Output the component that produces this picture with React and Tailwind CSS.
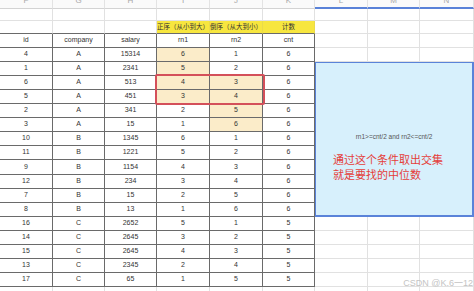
import React from "react";

const data = [
  ["4", "A", "15314", "6", "1", "6"],
  ["1", "A", "2341", "5", "2", "6"],
  ["6", "A", "513", "4", "3", "6"],
  ["5", "A", "451", "3", "4", "6"],
  ["2", "A", "341", "2", "5", "6"],
  ["3", "A", "15", "1", "6", "6"],
  ["10", "B", "1345", "6", "1", "6"],
  ["11", "B", "1221", "5", "2", "6"],
  ["9", "B", "1154", "4", "3", "6"],
  ["12", "B", "234", "3", "4", "6"],
  ["7", "B", "15", "2", "5", "6"],
  ["8", "B", "13", "1", "6", "6"],
  ["16", "C", "2652", "5", "1", "5"],
  ["14", "C", "2645", "3", "2", "5"],
  ["15", "C", "2645", "4", "3", "5"],
  ["13", "C", "2345", "2", "4", "5"],
  ["17", "C", "65", "1", "5", "5"],
];

const letters = ["F", "G", "H", "I", "J", "K", "L", "M", "N"];

const LIGHT = "border-r border-b border-[#e1e1e1]";
const DARK = "border-r border-b border-[#6a6a6a]";

function HeaderRow() {
  return letters.map((l, i) => (
    <div
      key={"h" + l}
      className={
        i < 6
          ? "flex justify-center overflow-hidden border-r border-b border-r-[#e3e3e3] border-b-[#d3d3d3] bg-[#fafafa]"
          : "flex justify-center overflow-hidden border-r border-b-2 border-r-[#e3e3e3] border-b-[#5a82d8] bg-[#fafafa]"
      }
    >
      <span className="-mt-[3px] text-[8px] leading-[8px] text-[#a9a9a9]">{l}</span>
    </div>
  ));
}

function BlankRow() {
  return letters.map((l) => <div key={"b" + l} className={LIGHT} />);
}

function YellowRow() {
  const cells = [];
  for (let i = 0; i < 3; i++) {
    cells.push(
      <div
        key={"y" + i}
        className="border-r border-b border-r-[#e1e1e1] border-b-[#6a6a6a]"
      />
    );
  }
  const labels = ["正序（从小到大）", "倒序（从大到小）", "计数"];
  labels.forEach((t, i) => {
    cells.push(
      <div
        key={"yl" + i}
        className="flex items-center justify-center overflow-hidden whitespace-nowrap border-r border-b border-r-[#eadb4a] border-b-[#6a6a6a] bg-[#f7e63f] text-[6.5px] text-[#333]"
      >
        {t}
      </div>
    );
  });
  for (let i = 0; i < 3; i++) {
    cells.push(<div key={"yr" + i} className={LIGHT} />);
  }
  return cells;
}

function TableRow({ cells, k, skipRight }) {
  const out = cells.map((c, i) => {
    let beige = false;
    if (k >= 1 && k <= 4 && i === 3) beige = true;
    if (k >= 3 && k <= 6 && i === 4) beige = true;
    return (
      <div
        key={k + "-" + i}
        className={
          beige
            ? "flex items-center justify-center border-r border-b border-[#6a6a6a] bg-[#fbecc9] text-[7px] text-[#333]"
            : "flex items-center justify-center border-r border-b border-[#6a6a6a] text-[7px] text-[#333]"
        }
      >
        {c}
      </div>
    );
  });
  if (!skipRight) {
    for (let i = 0; i < 3; i++) {
      out.push(<div key={k + "-r" + i} className={LIGHT} />);
    }
  }
  return out;
}

export default function App() {
  return (
    <div
      className="relative h-[291px] w-[474px] overflow-hidden bg-white"
      style={{ fontFamily: '"Liberation Sans", "Noto Sans CJK SC", sans-serif' }}
    >
      <div className="grid grid-cols-[53px_52px_52px_53px_53px_52px_53px_52px_54px] grid-rows-[9px_12px_13px_14px_repeat(8,14px)_15px_repeat(8,14px)_10px]">
        {/* merged note cell */}
        <div className="col-start-7 col-span-3 row-start-6 row-span-11 -ml-px -mt-px flex flex-col border-2 border-[#5a83d9] bg-[#d7f0fc]">
          <div className="self-center pt-[70px] text-[6.5px] leading-[8px] text-[#555]">
            rn1&gt;=cnt/2 and rn2&lt;=cnt/2
          </div>
          <div
            className="mt-[11px] pl-[17px] text-[11px] leading-[15px] text-[#e53e3a]"
            style={{ fontFamily: '"Noto Sans CJK SC", sans-serif' }}
          >
            <div>通过这个条件取出交集</div>
            <div>就是要找的中位数</div>
          </div>
        </div>

        <HeaderRow />
        <BlankRow />
        <YellowRow />
        <TableRow cells={["id", "company", "salary", "rn1", "rn2", "cnt"]} k={0} skipRight={false} />
        {data.map((row, idx) => (
          <TableRow
            key={idx}
            cells={row}
            k={idx + 1}
            skipRight={idx + 1 >= 2 && idx + 1 <= 12}
          />
        ))}
        {letters.map((l) => (
          <div key={"e" + l} className="border-r border-[#e1e1e1]" />
        ))}
      </div>

      {/* red highlight box */}
      <div className="absolute left-[155px] top-[74px] h-[31px] w-[110px] rounded-[2px] border-2 border-[#d4505a]" />

      {/* watermark */}
      <div className="absolute bottom-[3px] right-[1px] text-[9px] leading-[10px] text-[#c4c4c4]">
        CSDN @K.6一12
      </div>
    </div>
  );
}
